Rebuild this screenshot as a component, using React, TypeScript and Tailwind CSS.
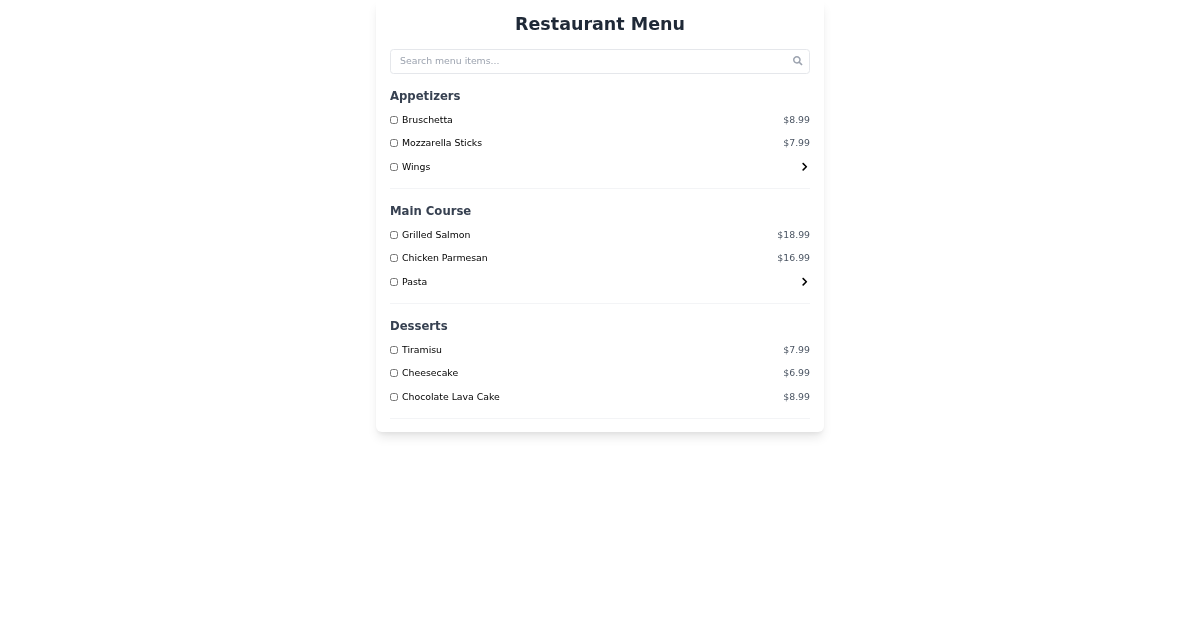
import { FaSearch, FaChevronRight } from 'react-icons/fa'

const sections = [
  {
    title: 'Appetizers',
    items: [
      { name: 'Bruschetta', price: '$8.99' },
      { name: 'Mozzarella Sticks', price: '$7.99' },
      { name: 'Wings' },
    ],
  },
  {
    title: 'Main Course',
    items: [
      { name: 'Grilled Salmon', price: '$18.99' },
      { name: 'Chicken Parmesan', price: '$16.99' },
      { name: 'Pasta' },
    ],
  },
  {
    title: 'Desserts',
    items: [
      { name: 'Tiramisu', price: '$7.99' },
      { name: 'Cheesecake', price: '$6.99' },
      { name: 'Chocolate Lava Cake', price: '$8.99' },
    ],
  },
]

export default function App() {
  return (
    <div className="min-h-screen bg-white font-['DejaVu_Sans',sans-serif]">
      <div className="mx-auto w-[448px] rounded-b-[6px] bg-white px-[14px] pt-[14px] pb-[13.4px] shadow-[0_7px_11px_-2px_rgba(0,0,0,0.1),0_3px_4px_-1.5px_rgba(0,0,0,0.05)] will-change-transform">
        <h1 className="mb-[14px] text-center text-[17.5px] leading-[21px] font-bold text-[#1f2937]">Restaurant Menu</h1>

        <div className="relative mb-[14.5px]">
          <input
            type="text"
            placeholder="Search menu items..."
            className="block h-[24.5px] w-full rounded-[3.5px] border border-[#e5e7eb] px-[9px] pb-[1px] text-[9.33px] outline-none placeholder:text-[#9ca3af]"
          />
          <FaSearch className="absolute top-[7px] right-[7.5px] h-[9.5px] w-[9.5px] text-[#9ca3af]" />
        </div>

        {sections.map((section) => (
          <div key={section.title} className="mb-[14.4px] border-b border-[#f3f4f6] pb-[9.3px] last:mb-0">
            <h2 className="mb-[2.8px] text-[11.67px] leading-[17.5px] font-bold text-[#374151]">{section.title}</h2>
            {section.items.map((item) => (
              <div key={item.name} className="flex h-[23.33px] items-center justify-between">
                <label className="flex items-center text-[9.33px] text-black">
                  <input type="checkbox" className="mr-[4px] h-[8px] w-[8px]" />
                  {item.name}
                </label>
                {item.price ? (
                  <span className="text-[9.33px] text-[#4b5563]">{item.price}</span>
                ) : (
                  <FaChevronRight className="mr-[0.5px] h-[9.5px] w-[9.5px] text-black" />
                )}
              </div>
            ))}
          </div>
        ))}
      </div>
    </div>
  )
}
